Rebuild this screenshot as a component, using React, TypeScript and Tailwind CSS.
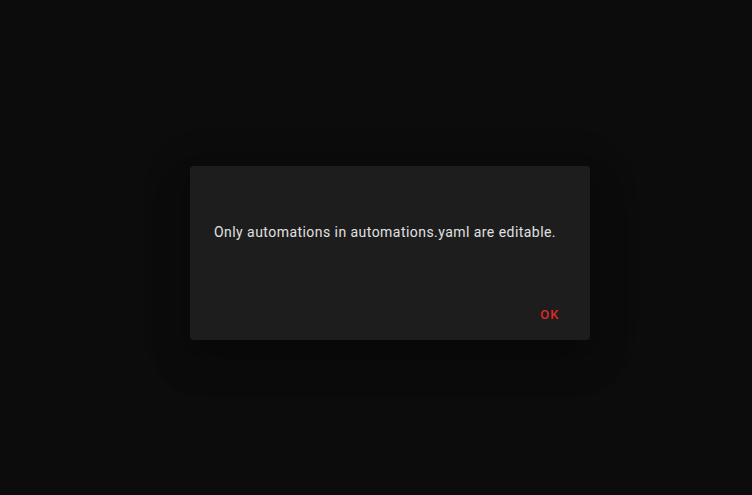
export default function App() {
  return (
    <div
      className="flex h-[495px] w-[752px] items-center justify-center bg-[#0c0c0c] pl-[28px] pt-[10px]"
      style={{ fontFamily: "Roboto, 'Noto Sans', sans-serif" }}
    >
      <div className="flex h-[174px] w-[400px] flex-col rounded-[4px] bg-[#1d1d1d] shadow-[0_11px_15px_-7px_rgba(0,0,0,0.2),0_24px_38px_3px_rgba(0,0,0,0.14),0_9px_46px_8px_rgba(0,0,0,0.12)]">
        <div className="flex-1 px-6 pt-[56px] text-[14px] leading-5 tracking-[0.45px] text-[#e1e1e1]">
          Only automations in automations.yaml are editable.
        </div>
        <div className="flex justify-end px-2 pb-[7px] pt-[9px]">
          <button className="h-9 min-w-16 rounded px-2 text-[13px] font-medium uppercase tracking-[1.25px] text-[#de2a2a]">
            OK
          </button>
        </div>
      </div>
    </div>
  );
}
